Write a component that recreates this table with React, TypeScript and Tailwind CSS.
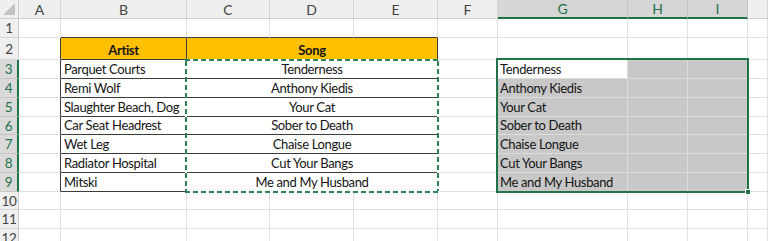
import React from "react";

const ARTISTS = [
  "Parquet Courts",
  "Remi Wolf",
  "Slaughter Beach, Dog",
  "Car Seat Headrest",
  "Wet Leg",
  "Radiator Hospital",
  "Mitski",
];

const SONGS = [
  "Tenderness",
  "Anthony Kiedis",
  "Your Cat",
  "Sober to Death",
  "Chaise Longue",
  "Cut Your Bangs",
  "Me and My Husband",
];

const LETTERS = ["A", "B", "C", "D", "E", "F", "G", "H", "I", ""];

// Grid placement classes, written out in full so the stylesheet picks them up.
const COL_START = [
  "",
  "col-start-1",
  "col-start-2",
  "col-start-3",
  "col-start-4",
  "col-start-5",
  "col-start-6",
  "col-start-7",
  "col-start-8",
  "col-start-9",
  "col-start-10",
  "col-start-11",
];

const ROW_START = [
  "",
  "row-start-1",
  "row-start-2",
  "row-start-3",
  "row-start-4",
  "row-start-5",
  "row-start-6",
  "row-start-7",
  "row-start-8",
  "row-start-9",
  "row-start-10",
  "row-start-11",
  "row-start-12",
  "row-start-13",
];

const isSelCol = (c: number) => c >= 7 && c <= 9;
const isSelRow = (r: number) => r >= 3 && r <= 9;

function Corner() {
  return (
    <div className="col-start-1 row-start-1 bg-[#efefef] border-r border-b border-[#cdcdcd] flex items-end justify-end p-[3px]">
      <svg width="12" height="12" viewBox="0 0 12 12">
        <polygon points="12,0 12,12 0,12" fill="#c3c3c3" />
      </svg>
    </div>
  );
}

function ColHeader({ c }: { c: number }) {
  const sel = isSelCol(c);
  const cls = [
    COL_START[c + 1],
    "row-start-1 flex items-center justify-center border-r text-[14px] leading-none pt-[1px]",
    sel
      ? "bg-[#d6d6d6] text-[#217346] border-b-2 border-b-[#217346] border-r-[#c4c4c4]"
      : "bg-[#efefef] text-[#444] border-b border-b-[#cdcdcd] border-r-[#d4d4d4]",
  ].join(" ");
  return <div className={cls}>{LETTERS[c - 1]}</div>;
}

function RowHeader({ r }: { r: number }) {
  const sel = isSelRow(r);
  const cls = [
    ROW_START[r + 1],
    "col-start-1 flex items-center justify-center border-b text-[13.5px] tracking-[-0.3px] leading-none pt-[2px]",
    sel
      ? "bg-[#dadada] text-[#217346] border-r-2 border-r-[#217346] border-b-[#c6c6c6]"
      : "bg-[#efefef] text-[#444] border-r border-r-[#cdcdcd] border-b-[#d6d6d6]",
  ].join(" ");
  return <div className={cls}>{r}</div>;
}

function BodyCell({ r, c }: { r: number; c: number }) {
  const inTable = r >= 2 && r <= 9 && c >= 2 && c <= 5;
  const merged = r >= 2 && r <= 9 && c === 3;
  const sel = isSelRow(r) && isSelCol(c);
  const active = r === 3 && c === 7;

  const rightDark = inTable || (c === 1 && r >= 2 && r <= 9);
  const bottomDark = inTable || (r === 1 && c >= 2 && c <= 5);

  let bg = "bg-white";
  if (r === 2 && inTable) bg = "bg-[#ffc000]";
  else if (sel && !active) bg = "bg-[#c8c8c8]";

  const right = rightDark
    ? "border-r-[#3c3c3c]"
    : sel
    ? "border-r-[#dcdcdc]"
    : "border-r-[#e1e1e1]";
  const bottom = bottomDark
    ? "border-b-[#3c3c3c]"
    : sel
    ? "border-b-[#dcdcdc]"
    : "border-b-[#e1e1e1]";

  let text: React.ReactNode = null;
  let align = "justify-start pl-[3px]";
  if (r === 2 && c === 2) {
    text = "Artist";
    align = "justify-center font-bold";
  } else if (r === 2 && c === 3) {
    text = "Song";
    align = "justify-center font-bold";
  } else if (isSelRow(r) && c === 2) {
    text = ARTISTS[r - 3];
  } else if (isSelRow(r) && c === 3) {
    text = SONGS[r - 3];
    align = "justify-center";
  } else if (isSelRow(r) && c === 7) {
    text = SONGS[r - 3];
    align = "justify-start pl-[2px]";
  }

  const cls = [
    COL_START[c + 1],
    ROW_START[r + 1],
    merged ? "col-span-3" : "",
    "flex items-end border-r border-b overflow-hidden whitespace-nowrap text-[13px] tracking-[-0.35px] leading-[18px] text-[#141414]",
    bg,
    right,
    bottom,
    align,
  ].join(" ");

  return <div className={cls}>{text}</div>;
}

// Dashed "copied range" outline around C3:E9.
function CopyMarquee() {
  const h =
    "h-[2px] bg-[repeating-linear-gradient(90deg,#2f8253_0_5px,#ffffff_5px_8px)]";
  const v =
    "w-[2px] bg-[repeating-linear-gradient(180deg,#2f8253_0_5px,#ffffff_5px_8px)]";
  return (
    <div className="col-start-4 col-end-7 row-start-4 row-end-11 -ml-[2px] -mt-[1px] -mr-[1px] -mb-[1px] flex flex-col pointer-events-none z-10">
      <div className={h} />
      <div className="flex-1 flex justify-between">
        <div className={v} />
        <div className={v} />
      </div>
      <div className={h} />
    </div>
  );
}

// Outline of the selected range G3:I9 with its fill handle.
function Selection() {
  return (
    <div className="col-start-8 col-end-11 row-start-4 row-end-11 -ml-[2px] -mt-[2px] -mr-[1px] -mb-[1px] border-2 border-[#217346] relative pointer-events-none z-10">
      <div className="absolute -right-[4px] -bottom-[4px] w-[6px] h-[6px] bg-[#217346] border border-white" />
    </div>
  );
}

export default function App() {
  const rows = Array.from({ length: 12 }, (_, i) => i + 1);
  const cols = Array.from({ length: 10 }, (_, i) => i + 1);

  return (
    <div className="w-[768px] h-[241px] overflow-hidden bg-white font-['Lato',sans-serif] grid grid-cols-[19px_42px_126px_83px_84px_84px_60px_130px_60px_60px_1fr] grid-rows-[19px_19px_22px_19px_19px_19px_18px_19px_19px_19px_18px_19px_19px]">
      <Corner />
      {cols.map((c) => (
        <ColHeader key={`h${c}`} c={c} />
      ))}
      {rows.map((r) => (
        <RowHeader key={`r${r}`} r={r} />
      ))}
      {rows.map((r) =>
        cols.map((c) => {
          // C:E are merged on the table rows; only C draws.
          if (r >= 2 && r <= 9 && (c === 4 || c === 5)) return null;
          return <BodyCell key={`${r}-${c}`} r={r} c={c} />;
        })
      )}
      <CopyMarquee />
      <Selection />
    </div>
  );
}
